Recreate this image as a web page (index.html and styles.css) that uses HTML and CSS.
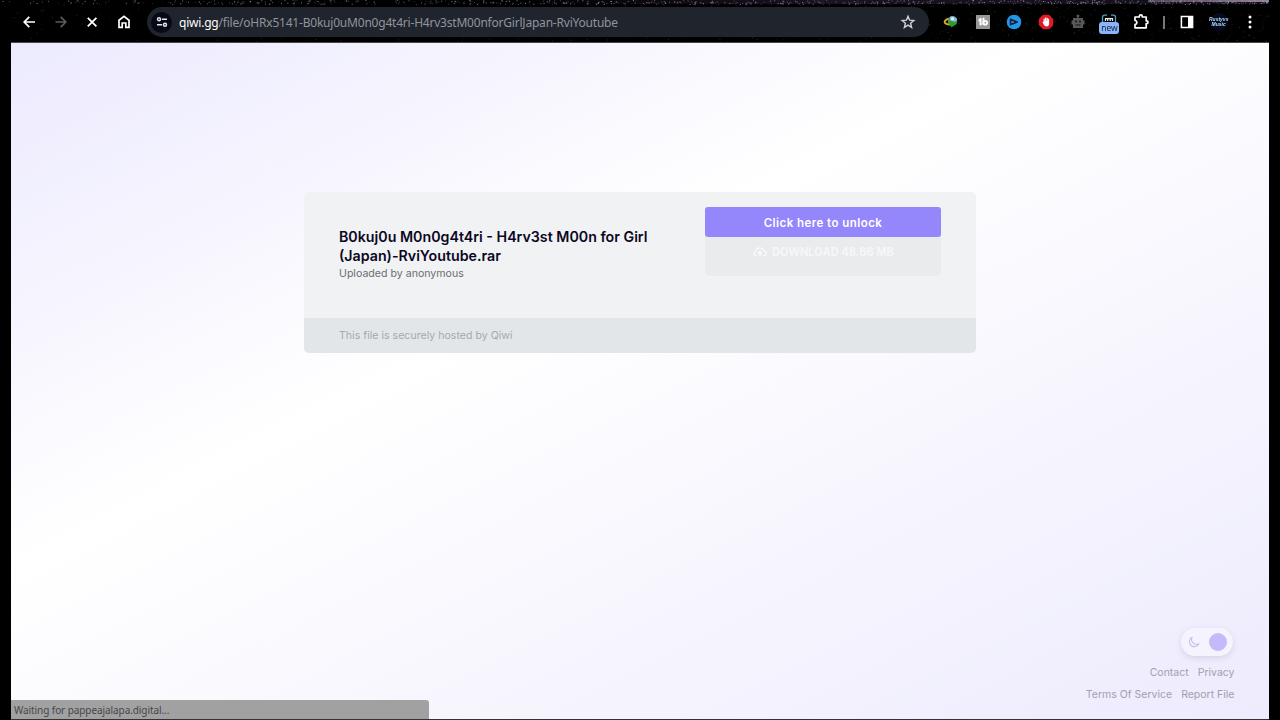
FILE: index.html
```html
<!DOCTYPE html>
<html lang="en">
<head>
    <meta charset="UTF-8">
    <meta name="viewport" content="width=device-width, initial-scale=1.0">
    <title>Qiwi</title>
    <link rel="stylesheet" href="styles.css">
</head>
<body>
    <header class="toolbar">
        <canvas class="stars" id="stars" width="1280" height="42"></canvas>
        <nav class="nav-buttons">
            <svg width="16" height="16" viewBox="0 0 16 16"><path d="M14 8H3.500M8.300 2.800L3.200 8l5.100 5.200" fill="none" stroke="#fff" stroke-width="1.700"/></svg>
            <svg width="16" height="16" viewBox="0 0 16 16"><path d="M2.500 8h10.500M7.700 2.800L12.800 8l-5.100 5.200" fill="none" stroke="#5c5c60" stroke-width="1.700"/></svg>
            <svg width="16" height="16" viewBox="0 0 16 16"><path d="M3.800 3.800l8.600 8.600M12.400 3.800l-8.600 8.600" fill="none" stroke="#fff" stroke-width="1.800"/></svg>
            <svg width="16" height="16" viewBox="0 0 16 16"><path d="M3 13.300V6.200L8 2.400l5 3.800v7.100H9.800V9H6.200v4.300z" fill="none" stroke="#fff" stroke-width="1.700"/></svg>
        </nav>
        <div class="address-bar">
            <span class="site-info">
                <svg width="12" height="12" viewBox="0 0 12 12" fill="none" stroke="#e6e8ee" stroke-width="1.400"><circle cx="3" cy="3.200" r="1.500"/><path d="M5.800 3.200h5.200M1 8.800h5.200"/><circle cx="9" cy="8.800" r="1.500"/></svg>
            </span>
            <span class="url"><b>qiwi.gg</b>/file/oHRx5141-B0kuj0uM0n0g4t4ri-H4rv3stM00nforGirlJapan-RviYoutube</span>
            <svg class="bookmark" width="16" height="16" viewBox="0 0 16 16"><path d="M8 2.300l1.600 3.900 4.200.3-3.200 2.700 1 4.200L8 11.100l-3.600 2.300 1-4.200-3.200-2.700 4.200-.3z" fill="none" stroke="#cdd0d6" stroke-width="1.400"/></svg>
        </div>
        <div class="extensions">
            <svg width="16" height="16" viewBox="0 0 16 16"><circle cx="9.500" cy="6.800" r="4.800" fill="#4d9a48"/><path d="M7 3a5 5 0 0 1 7.200 3L11 8 7 6z" fill="#8fb7ee"/><circle cx="9.500" cy="4.800" r="1.500" fill="#e5efff"/><path d="M5.500 4.300C2.500 5.500.8 7.600 2.200 9.200c1 1.100 3 1.400 5 1.300" fill="none" stroke="#d0a92f" stroke-width="1.900"/><path d="M5 8l3.500 5.500L14 9.500l-4-2z" fill="#2b9a30"/></svg>
            <span class="ext-tb"><svg width="14" height="14" viewBox="0 0 14 14"><path d="M2.500 5.200h3.200M4.500 3v6.300h1.300M7.500 2.800v6.900" fill="none" stroke="#fff" stroke-width="1.900"/><circle cx="9.200" cy="7.800" r="1.900" fill="none" stroke="#fff" stroke-width="1.800"/></svg></span>
            <svg width="16" height="16" viewBox="0 0 16 16"><circle cx="8" cy="8" r="7.300" fill="#2497ea"/><path d="M4.200 4.800L12 8l-7.800 3.200z" fill="#10253d" stroke="#10253d" stroke-linejoin="round"/><path d="M5.200 7.400h2.600v1.300H5.200z" fill="#5aa9e2"/></svg>
            <svg width="16" height="16" viewBox="0 0 16 16"><path d="M5 .8h6L15.200 5v6L11 15.200H5L.8 11V5z" fill="#df1b25"/><path d="M6.200 8.500V5M7.700 8V3.900M9.200 8V4.300M10.500 8.500V5.400" stroke="#fff" stroke-width="1.200" stroke-linecap="round"/><path d="M5.600 7h5.500v2.800c0 3.500-4 3.300-5.100 1.300L4.500 8.500l1-.4z" fill="#fff"/></svg>
            <svg width="16" height="16" viewBox="0 0 16 16"><path d="M7.300 4V3.200a1.400 1.400 0 1 1 1.400 0V4H13v2.500h1.500v4H13V14H3v-3.500H1.500v-4H3V4z" fill="#58585a"/><circle cx="6" cy="7.500" r="1" fill="#111"/><circle cx="10" cy="7.500" r="1" fill="#111"/><path d="M5.500 11h5" stroke="#111"/></svg>
            <span class="ext-new">
                <svg width="16" height="16" viewBox="0 0 16 16"><path d="M1.500 8V3.200A2 2 0 0 1 3.500 1.200H6M10 1.200h2.500a2 2 0 0 1 2 2V8" fill="none" stroke="#4aa6c6" stroke-width="1.300"/><path d="M4.500 7V4.700h7V7M6.700 5v2M9.200 5v2" fill="none" stroke="#e8edf2" stroke-width="1.200"/></svg>
                <span class="badge">new</span>
            </span>
            <svg width="16" height="16" viewBox="0 0 16 16"><path d="M2 3h4.300v-.6a1.500 1.500 0 0 1 3 0V3h3.900v3.800h.4a1.400 1.400 0 0 1 0 2.800h-.4v4.200H2v-3.300c2.500-.4 2.500-3.700 0-4z" fill="none" stroke="#fff" stroke-width="1.700" stroke-linejoin="round"/></svg>
            <span class="divider"></span>
            <svg width="14" height="14" viewBox="0 0 14 14"><path d="M1.400 1.400h11.200v11.200H1.400z" fill="none" stroke="#fff" stroke-width="1.500"/><path d="M8 1h4.800v12H8z" fill="#fff"/></svg>
            <span class="profile"><span>Rustyvs</span><span>Music</span></span>
            <svg width="16" height="16" viewBox="0 0 16 16" fill="#fff"><circle cx="8" cy="3" r="1.500"/><circle cx="8" cy="8" r="1.500"/><circle cx="8" cy="13" r="1.500"/></svg>
        </div>
    </header>

    <main class="page">
        <section class="card">
            <div class="card-body">
                <div class="file-info">
                    <h1>B0kuj0u M0n0g4t4ri - H4rv3st M00n for Girl (Japan)-RviYoutube.rar</h1>
                    <p>Uploaded by anonymous</p>
                </div>
                <div class="download">
                    <button class="unlock" type="button">Click here to unlock</button>
                    <div class="download-link">
                        <svg width="14" height="10" viewBox="0 0 14 10" fill="none" stroke="#fafbfc" stroke-width="1.200"><path d="M4 9H3a2.400 2.400 0 0 1-.2-4.700A4 4 0 0 1 10.500 3.500 2.800 2.800 0 0 1 11 9h-1M7 9V4.500M5 6.500l2-2 2 2"/></svg>
                        <span>DOWNLOAD 48.66 MB</span>
                    </div>
                </div>
            </div>
            <div class="card-footer">This file is securely hosted by Qiwi</div>
        </section>

        <footer class="site-footer">
            <div class="theme-toggle">
                <svg width="12" height="12" viewBox="0 0 12 12"><path d="M4.100 1.200A5 5 0 1 0 10.900 7.800 5 5 0 0 1 4.100 1.200z" fill="none" stroke="#c9bde8" stroke-width="1.100" stroke-linejoin="round"/></svg>
                <span class="knob"></span>
            </div>
            <div class="links"><a>Contact</a><a>Privacy</a></div>
            <div class="links"><a>Terms Of Service</a><a>Report File</a></div>
        </footer>

        <div class="status">Waiting for pappeajalapa.digital...</div>
    </main>

    <script src="stars.js"></script>
</body>
</html>
```

FILE: styles.css
```css
* {
    box-sizing: border-box;
}
body {
    margin: 0;
    height: 720px;
    overflow: hidden;
    background: #000;
    font-family: Inter, "Liberation Sans", sans-serif;
    display: flex;
    flex-direction: column;
}
svg {
    display: block;
    flex: none;
}

/* browser toolbar */
.toolbar {
    position: relative;
    height: 43px;
    padding: 1px 20px 0 21px;
    display: flex;
    align-items: center;
}
.stars {
    position: absolute;
    top: 0;
    left: 0;
}
.nav-buttons,
.address-bar,
.extensions {
    position: relative;
    display: flex;
    align-items: center;
}
.nav-buttons {
    gap: 15.500px;
}
.address-bar {
    width: 782px;
    height: 30px;
    margin-left: 15.500px;
    padding: 0 13px 0 4px;
    border-radius: 15px;
    background: #20252d;
}
.site-info {
    width: 21px;
    height: 21px;
    border-radius: 50%;
    background: #070a14;
    display: flex;
    align-items: center;
    justify-content: center;
}
.url {
    flex: 1;
    margin-left: 7px;
    font: 12px "Noto Sans", sans-serif;
    letter-spacing: -0.210px;
    color: #8f949c;
    white-space: nowrap;
}
.url b {
    font-weight: normal;
    color: #fff;
}
.extensions {
    margin-left: 14px;
    gap: 15.700px;
}
.ext-tb {
    width: 14px;
    height: 14px;
    margin: 0 1px;
    background: #989898;
}
.ext-new {
    position: relative;
    width: 20px;
    height: 16px;
    margin: 0 -2px;
    padding-left: 2px;
}
.badge {
    position: absolute;
    left: 0;
    top: 8px;
    width: 20px;
    height: 12px;
    border-radius: 3px;
    background: #8bb5f8;
    color: #10243f;
    font: 8.500px/12px "Noto Sans", sans-serif;
    text-align: center;
}
.divider {
    width: 2px;
    height: 13px;
    margin: 0 -1.500px;
    background: #77777b;
}
.profile {
    width: 18px;
    height: 18px;
    margin: 0 -1.500px 0 0.500px;
    border-radius: 50%;
    background: #050a20;
    color: #b5dcf5;
    font: italic bold 5px/5px "Liberation Sans", sans-serif;
    display: flex;
    flex-direction: column;
    align-items: center;
    justify-content: center;
}

/* page */
.page {
    position: relative;
    flex: 1;
    margin: -1px 11px 0;
    padding: 149px 34.500px 13px 293px;
    border-top: 1px solid #47474c;
    border-bottom: 1px solid #333;
    background: linear-gradient(153deg, #eceafe 0%, #fff 40%, #edebfd 100%);
    display: flex;
    flex-direction: column;
    justify-content: space-between;
}
.card {
    width: 672px;
    border-radius: 5px;
    overflow: hidden;
    background: #f1f2f4;
}
.card-body {
    height: 126px;
    padding: 15px 35px 0;
    display: flex;
    justify-content: space-between;
}
.file-info {
    width: 330px;
    padding-top: 20px;
}
.file-info h1 {
    margin: 0;
    font-size: 14.220px;
    line-height: 19px;
    font-weight: 600;
    color: #0b0722;
}
.file-info p {
    margin: 0;
    font-size: 10.600px;
    line-height: 17px;
    color: #6d6d72;
}
.download {
    width: 236px;
    height: 69px;
    border-radius: 5px;
    background: #e9ebed;
}
.unlock {
    display: block;
    width: 100%;
    height: 30px;
    padding: 1px 0 0;
    border: none;
    border-radius: 3px;
    background: #9486fb;
    color: #fff;
    font: 600 11.500px Inter, sans-serif;
    letter-spacing: 0.450px;
    cursor: pointer;
}
.download-link {
    height: 30px;
    padding-left: 1px;
    display: flex;
    align-items: center;
    justify-content: center;
    gap: 5px;
    color: #f6f7f9;
    font-size: 11.100px;
    font-weight: 700;
}
.card-footer {
    height: 34.500px;
    padding-left: 35px;
    background: #e2e6e9;
    color: #a5a9ae;
    font-size: 10.600px;
    line-height: 35px;
}

.site-footer {
    display: flex;
    flex-direction: column;
    align-items: flex-end;
    font-size: 10.500px;
    color: #a29fb0;
}
.theme-toggle {
    width: 52px;
    height: 28px;
    margin: 0 2px 6px;
    padding: 0 6px 0 7px;
    border-radius: 14px;
    background: #f5f3fe;
    box-shadow: 0 2px 6px rgba(60, 50, 110, 0.150);
    display: flex;
    align-items: center;
    justify-content: space-between;
}
.knob {
    width: 18px;
    height: 18px;
    border-radius: 50%;
    background: #c5b9fa;
}
.links {
    height: 22px;
    line-height: 22px;
    display: flex;
    gap: 9px;
}
.status {
    position: absolute;
    left: 0;
    bottom: 0;
    width: 418px;
    height: 19px;
    padding-left: 3px;
    border-top-right-radius: 3px;
    background: #a1a1a2;
    color: #46464a;
    font: 10px/20px "Noto Sans", sans-serif;
    letter-spacing: -0.080px;
}
```

FILE: stars.js
```js
// starry theme behind the toolbar
const ctx = document.getElementById('stars').getContext('2d');
let seed = 17;

function rand() {
    seed = (seed * 16807) % 2147483647;
    return seed / 2147483647;
}

function drawStars(count, top, height, maxAlpha) {
    for (let i = 0; i < count; i++) {
        // denser toward the right
        const x = Math.pow(rand(), 0.7) * 1280;
        const y = top + rand() * height;
        ctx.fillStyle = `rgba(205, 195, 225, ${rand() * maxAlpha})`;
        ctx.fillRect(x, y, 1, 1);
    }
}

const glow = ctx.createLinearGradient(500, 0, 1280, 0);
glow.addColorStop(0, 'rgba(70, 50, 90, 0)');
glow.addColorStop(0.4, 'rgba(70, 50, 90, 0.35)');
glow.addColorStop(1, 'rgba(60, 50, 80, 0.3)');
ctx.fillStyle = glow;
ctx.fillRect(0, 0, 1269, 4);

drawStars(900, 0, 4, 0.7);
drawStars(800, 4, 38, 0.25);

const haze = ctx.createLinearGradient(1145, 0, 1269, 0);
haze.addColorStop(0, 'rgba(140, 125, 150, 0.5)');
haze.addColorStop(1, 'rgba(180, 160, 180, 0.8)');
ctx.fillStyle = haze;
ctx.fillRect(1148, 0, 121, 2);
ctx.clearRect(1269, 0, 11, 42);
```
